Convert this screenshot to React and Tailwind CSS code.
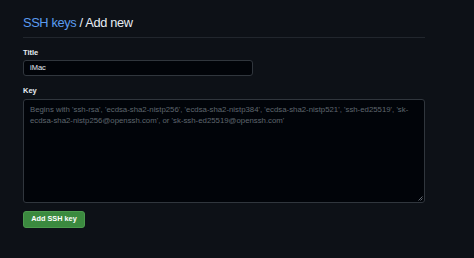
export default function App() {
  return (
    <div className="w-[474px] h-[258px] bg-[#0d1117] overflow-hidden" style={{ fontFamily: '"Liberation Sans", Arial, sans-serif' }}>
      <div className="pl-[23px] pt-[15px] w-[425px]">
        <div className="pb-[6px] border-b border-[#21262d]">
          <h1 className="text-[12.8px] leading-[16px] font-normal text-[#e6edf3] tracking-[-0.35px]">
            <span className="text-[#5b9cf0]">SSH keys</span> / Add new
          </h1>
        </div>
        <div className="mt-[10px]">
          <label className="block text-[7.5px] leading-[9px] font-bold text-[#e6edf3]">Title</label>
          <div className="mt-[3px] w-[230px] h-[16px] bg-[#010409] border border-[#30363d] rounded-[3px] flex items-center pl-[6px] text-[7.5px] text-[#e6edf3]">
            iMac
          </div>
        </div>
        <div className="mt-[10px]">
          <label className="block text-[7.5px] leading-[9px] font-bold text-[#e6edf3]">Key</label>
          <div className="relative mt-[4px] w-[402px] h-[104px] bg-[#010409] border border-[#30363d] rounded-[3px] pl-[6px] pr-[8px] pt-[4px]">
            <p className="text-[7.8px] leading-[11px] text-[#5f666e]">
              Begins with 'ssh-rsa', 'ecdsa-sha2-nistp256', 'ecdsa-sha2-nistp384', 'ecdsa-sha2-nistp521', 'ssh-ed25519', 'sk-ecdsa-sha2-nistp256@openssh.com', or 'sk-ssh-ed25519@openssh.com'
            </p>
            <svg className="absolute right-[1px] bottom-[1px]" width="5" height="5" viewBox="0 0 5 5">
              <path d="M4.5 0.5 L0.5 4.5 M4.5 2.5 L2.5 4.5" stroke="#8b949e" strokeWidth="0.7" />
            </svg>
          </div>
        </div>
        <button className="mt-[8px] h-[17px] w-[62px] bg-[#3b8a3f] rounded-[3px] border border-[#4b9a4d] text-white text-[7.3px] font-bold flex items-center justify-center">
          Add SSH key
        </button>
      </div>
    </div>
  );
}
